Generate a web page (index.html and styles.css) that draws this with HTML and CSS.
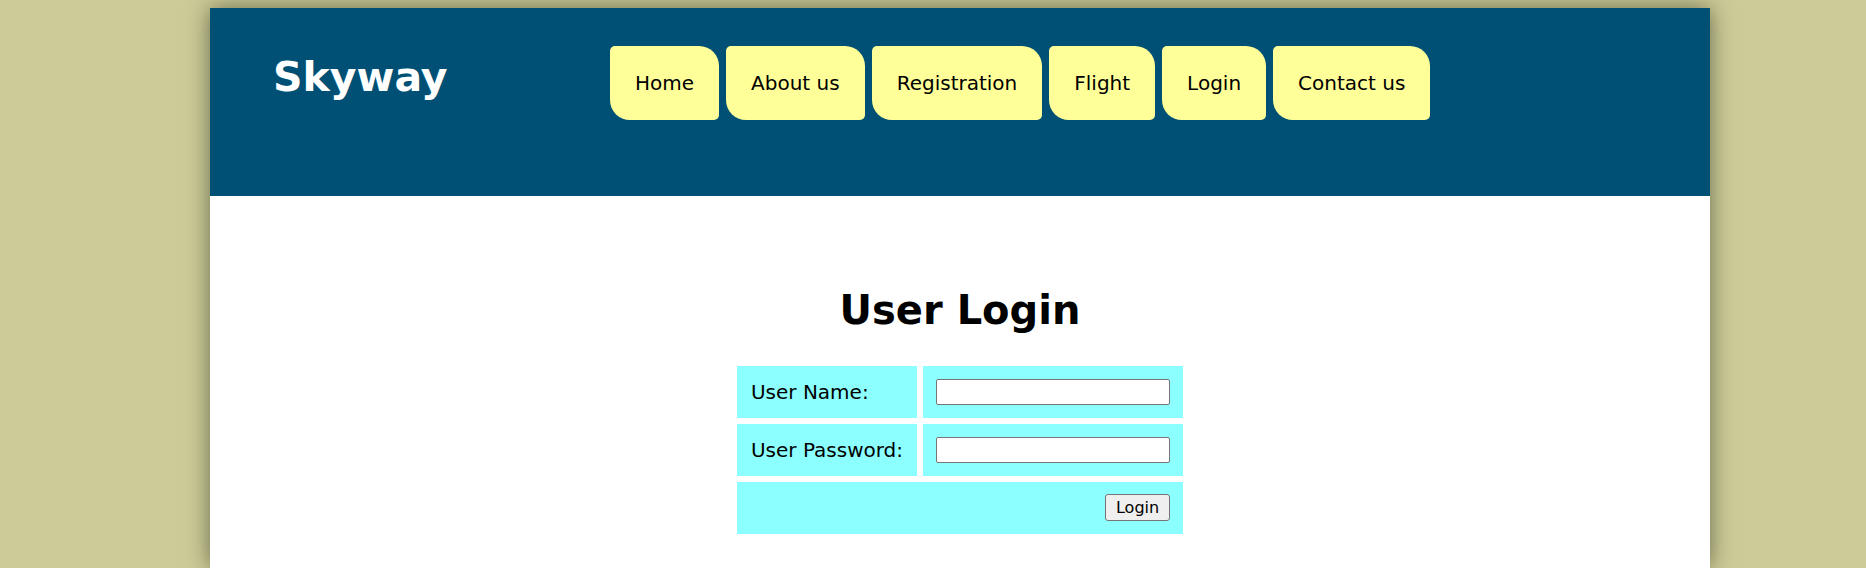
FILE: index.html
```html
<!DOCTYPE html>
<html lang="en">
<head>
<meta charset="utf-8">
<title>Skyway - User Login</title>
<link rel="stylesheet" href="styles.css">
</head>
<body>
<div class="page">
  <header class="header">
    <div class="logo">Skyway</div>
    <nav class="nav">
      <a class="nav-item" href="#">Home</a>
      <a class="nav-item" href="#">About us</a>
      <a class="nav-item" href="#">Registration</a>
      <a class="nav-item" href="#">Flight</a>
      <a class="nav-item" href="#">Login</a>
      <a class="nav-item" href="#">Contact us</a>
    </nav>
  </header>
  <main class="content">
    <h1 class="title">User Login</h1>
    <form class="login-form">
      <table class="login-table">
        <tr>
          <td class="label">User Name:</td>
          <td class="field"><input class="text-input" type="text"></td>
        </tr>
        <tr>
          <td class="label">User Password:</td>
          <td class="field"><input class="text-input" type="password"></td>
        </tr>
        <tr>
          <td class="actions" colspan="2"><button class="btn" type="button">Login</button></td>
        </tr>
      </table>
    </form>
  </main>
</div>
</body>
</html>
```
FILE: styles.css
```css
html, body {
  margin: 0;
  padding: 0;
}
body {
  background: #cccc99;
  font-family: "DejaVu Sans", Verdana, sans-serif;
  padding-top: 8px;
  overflow: hidden;
}
.page {
  width: 1500px;
  margin-left: 210px;
  background: #ffffff;
  min-height: 560px;
  box-shadow: 0 0 22px rgba(40, 40, 20, 0.6);
}
.header {
  height: 188px;
  box-sizing: border-box;
  background: #005075;
  display: flex;
  align-items: flex-start;
  padding: 38px 0 0 63px;
}
.logo {
  width: 337px;
  margin-top: 8px;
  color: #ffffff;
  font-weight: bold;
  font-size: 41px;
  line-height: 47px;
}
.nav {
  display: flex;
  gap: 7px;
}
.nav-item {
  display: block;
  background: #ffff99;
  color: #000000;
  text-decoration: none;
  font-size: 20px;
  line-height: 24px;
  padding: 25px;
  border-radius: 5px 20px 5px 20px;
}
.content {
  padding-top: 91px;
  text-align: center;
}
.title {
  margin: 0;
  font-size: 40px;
  line-height: 47px;
  font-weight: bold;
  color: #000000;
}
.login-form {
  margin: 0;
}
.login-table {
  margin: 26px auto 0;
  border-spacing: 6px;
  text-align: left;
}
.login-table td {
  background: #8cffff;
}
.label {
  font-size: 20px;
  padding: 13px 14px;
  white-space: nowrap;
}
.field {
  padding: 13px 13px;
}
.text-input {
  display: block;
  width: 234px;
  height: 26px;
  box-sizing: border-box;
  border: 1px solid #767676;
  border-radius: 2px;
  background: #ffffff;
  padding: 0 3px;
  font-family: "DejaVu Sans", sans-serif;
  font-size: 16px;
}
.actions {
  text-align: right;
  padding: 12px 13px 13px;
}
.btn {
  width: 65px;
  height: 27px;
  box-sizing: border-box;
  padding: 0;
  font-family: "DejaVu Sans", sans-serif;
  font-size: 16px;
  color: #000000;
  background: #efefef;
  border: 1px solid #767676;
  border-radius: 3px;
  vertical-align: top;
}
```
